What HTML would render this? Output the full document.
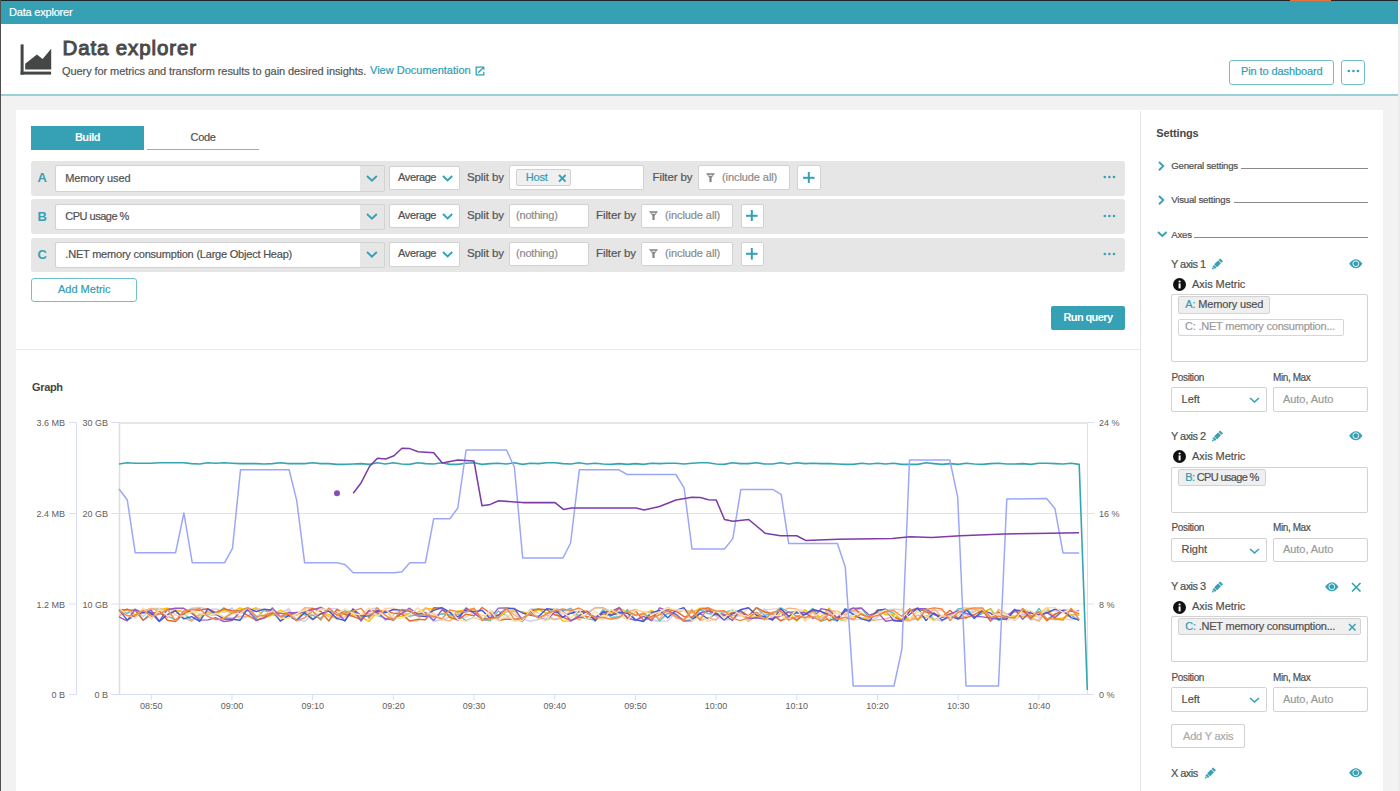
<!DOCTYPE html>
<html><head><meta charset="utf-8"><style>
*{box-sizing:border-box;margin:0;padding:0}
html,body{width:1400px;height:791px;overflow:hidden}
body{background:#f2f2f2;font-family:"Liberation Sans",sans-serif;color:#454646;position:relative}
.abs{position:absolute}
.t{position:absolute;white-space:nowrap;line-height:1;-webkit-text-stroke:0.2px currentColor}
.box{position:absolute;background:#fff;border:1px solid #d2d2d2;border-radius:2px}
.ax{font-family:"Liberation Sans",sans-serif;font-size:9px;fill:#606060}
</style></head><body>

<div class="abs" style="left:0;top:0;width:1400px;height:1px;background:#1e2629"></div>
<div class="abs" style="left:0;top:0;width:1px;height:791px;background:#4f4f4f"></div>
<div class="abs" style="left:1398px;top:0;width:2px;height:791px;background:#ececec"></div>
<div class="abs" style="left:1px;top:1px;width:1397px;height:23px;background:#36a0b4"></div>
<div class="abs" style="left:1290px;top:0;width:41px;height:1px;background:#e8733a"></div>
<div class="t" style="left:9px;top:6.69px;font-size:11px;color:#fff;letter-spacing:-0.2px;">Data explorer</div>
<div class="abs" style="left:1px;top:24px;width:1397px;height:70px;background:#fff"></div>
<div class="abs" style="left:1px;top:94px;width:1397px;height:2px;background:#9bd0db"></div>
<svg class="abs" style="left:20px;top:44px" width="33" height="32"><rect x="0.6" y="0.4" width="3" height="30.3" fill="#454646"/><rect x="0.6" y="27.6" width="30.5" height="3" fill="#454646"/><path d="M5.2 19.8 L16.9 10.6 L22.6 15.1 L31.2 4.7 L31.2 25.6 L5.2 25.6 Z" fill="#454646"/></svg>
<div class="t" style="left:62.5px;top:38.35px;font-size:20.5px;color:#4a4a4a;letter-spacing:0.87px;-webkit-text-stroke:1px #4a4a4a;">Data explorer</div>
<div class="t" style="left:62px;top:65.59px;font-size:11px;color:#555;letter-spacing:-0.08px;">Query for metrics and transform results to gain desired insights.</div>
<div class="t" style="left:370px;top:65.49px;font-size:11px;color:#2f9db3;">View Documentation</div>
<svg class="abs" style="left:475px;top:65.8px" width="10" height="10"><path d="M6.2 1.2 H1.2 V8.8 H8.8 V5.8" fill="none" stroke="#36a0b4" stroke-width="1.3"/><path d="M3.6 6.3 L7.2 2.7" stroke="#36a0b4" stroke-width="1.4" stroke-linecap="round"/><path d="M5.6 0.6 H9.4 V4.4 Z" fill="#36a0b4"/></svg>
<div class="abs" style="left:1228.5px;top:60px;width:105.5px;height:24.5px;border:1.5px solid #70bfcd;border-radius:3px;background:#fff"></div>
<div class="t" style="left:1241px;top:66.49px;font-size:11px;color:#2f9db3;letter-spacing:-0.1px;">Pin to dashboard</div>
<div class="abs" style="left:1341px;top:60px;width:23.5px;height:24.5px;border:1.5px solid #70bfcd;border-radius:3px;background:#fff"></div>
<svg class="abs" style="left:1346.5px;top:69.2px" width="14" height="4"><circle cx="1.8" cy="2" r="1.3" fill="#36a0b4"/><circle cx="6.3999999999999995" cy="2" r="1.3" fill="#36a0b4"/><circle cx="11.0" cy="2" r="1.3" fill="#36a0b4"/></svg>
<div class="abs" style="left:16px;top:110px;width:1125px;height:681px;background:#fff"></div>
<div class="abs" style="left:1140px;top:111px;width:1px;height:680px;background:#e4e4e4"></div>
<div class="abs" style="left:1141px;top:110px;width:242px;height:681px;background:#fff"></div>
<div class="abs" style="left:16px;top:349px;width:1124px;height:1px;background:#e8e8e8"></div>
<div class="abs" style="left:31px;top:126px;width:113px;height:24px;background:#36a0b4"></div>
<div class="t" style="left:31px;top:132.39px;font-size:11px;color:#fff;font-weight:bold;-webkit-text-stroke:0;letter-spacing:-0.45px;width:113px;text-align:center;">Build</div>
<div class="abs" style="left:147px;top:149px;width:112px;height:1.3px;background:#70bfcd"></div>
<div class="t" style="left:147px;top:132.39px;font-size:11px;color:#505050;letter-spacing:-0.35px;width:112px;text-align:center;">Code</div>
<div class="abs" style="left:31px;top:161px;width:1094px;height:34.6px;background:#e6e6e6;border-radius:3px"></div>
<div class="t" style="left:37.5px;top:171.40px;font-size:13px;color:#36a0b4;font-weight:bold;-webkit-text-stroke:0;letter-spacing:-0.3px;">A</div>
<div class="box" style="left:55.4px;top:165.2px;width:329.4px;height:26.4px;background:#e6e6e6"></div>
<div class="abs" style="left:56.4px;top:166.2px;width:303.3px;height:24.4px;background:#fff;border-radius:2px 0 0 2px"></div>
<div class="t" style="left:65.3px;top:172.59px;font-size:11px;color:#505050;letter-spacing:-0.14px;">Memory used</div>
<svg class="abs" style="left:366px;top:174.8px" width="11.8" height="7.6"><polyline points="1,1 5.9,5.6 10.8,1" fill="none" stroke="#36a0b4" stroke-width="1.9"/></svg>
<div class="box" style="left:388.5px;top:165.5px;width:71.3px;height:24.6px"></div>
<div class="t" style="left:398.1px;top:171.69px;font-size:11px;color:#505050;letter-spacing:-0.4px;">Average</div>
<svg class="abs" style="left:442.1px;top:174.6px" width="11.2" height="7.4"><polyline points="1,1 5.6,5.4 10.2,1" fill="none" stroke="#36a0b4" stroke-width="1.9"/></svg>
<div class="t" style="left:467px;top:171.97px;font-size:11.5px;color:#555;letter-spacing:-0.1px;">Split by</div>
<div class="box" style="left:508.6px;top:165.4px;width:135.69999999999993px;height:24.4px"></div>
<div class="abs" style="left:516.1px;top:169.3px;width:55.3px;height:17.1px;background:#f0f0f0;border:1px solid #d0d0d0;border-radius:2px"></div>
<div class="t" style="left:525.7px;top:171.69px;font-size:11px;color:#2f9db3;letter-spacing:-0.18px;">Host</div>
<svg class="abs" style="left:558px;top:174px" width="8.6" height="8.6"><path d="M1 1 L7.6 7.6 M7.6 1 L1 7.6" stroke="#36a0b4" stroke-width="1.8"/></svg>
<div class="t" style="left:652.5px;top:171.97px;font-size:11.5px;color:#555;letter-spacing:-0.1px;">Filter by</div>
<div class="box" style="left:698px;top:165.4px;width:92px;height:24.4px"></div>
<svg class="abs" style="left:705.7px;top:172.9px" width="10" height="10"><path d="M0 0.2 H9 L5.6 4.8 V9 H3.4 V4.8 Z" fill="#858585"/><rect x="2.6" y="1.8" width="3.8" height="1.1" fill="#fff" opacity="0.85"/></svg>
<div class="t" style="left:722px;top:171.79px;font-size:11px;color:#8a8a8a;letter-spacing:-0.08px;">(include all)</div>
<div class="box" style="left:797.2px;top:165.4px;width:23.4px;height:24.4px"></div>
<svg class="abs" style="left:803.0px;top:171.6px" width="11.6" height="11.6"><rect x="4.8" y="0" width="2" height="11.6" fill="#36a0b4"/><rect x="0" y="4.8" width="11.6" height="2" fill="#36a0b4"/></svg>
<svg class="abs" style="left:1103px;top:175.2px" width="14" height="4"><circle cx="1.8" cy="2" r="1.3" fill="#36a0b4"/><circle cx="6.3999999999999995" cy="2" r="1.3" fill="#36a0b4"/><circle cx="11.0" cy="2" r="1.3" fill="#36a0b4"/></svg>
<div class="abs" style="left:31px;top:199.3px;width:1094px;height:34.6px;background:#e6e6e6;border-radius:3px"></div>
<div class="t" style="left:37.5px;top:209.70px;font-size:13px;color:#36a0b4;font-weight:bold;-webkit-text-stroke:0;letter-spacing:-0.3px;">B</div>
<div class="box" style="left:55.4px;top:203.5px;width:329.4px;height:26.4px;background:#e6e6e6"></div>
<div class="abs" style="left:56.4px;top:204.5px;width:303.3px;height:24.4px;background:#fff;border-radius:2px 0 0 2px"></div>
<div class="t" style="left:65.3px;top:210.89px;font-size:11px;color:#505050;letter-spacing:-0.5px;">CPU usage %</div>
<svg class="abs" style="left:366px;top:213.10000000000002px" width="11.8" height="7.6"><polyline points="1,1 5.9,5.6 10.8,1" fill="none" stroke="#36a0b4" stroke-width="1.9"/></svg>
<div class="box" style="left:388.5px;top:203.8px;width:71.3px;height:24.6px"></div>
<div class="t" style="left:398.1px;top:209.99px;font-size:11px;color:#505050;letter-spacing:-0.4px;">Average</div>
<svg class="abs" style="left:442.1px;top:212.9px" width="11.2" height="7.4"><polyline points="1,1 5.6,5.4 10.2,1" fill="none" stroke="#36a0b4" stroke-width="1.9"/></svg>
<div class="t" style="left:467px;top:210.27px;font-size:11.5px;color:#555;letter-spacing:-0.1px;">Split by</div>
<div class="box" style="left:508.6px;top:203.70000000000002px;width:80.0px;height:24.4px"></div>
<div class="t" style="left:516px;top:210.09px;font-size:11px;color:#8a8a8a;letter-spacing:-0.2px;">(nothing)</div>
<div class="t" style="left:596px;top:210.27px;font-size:11.5px;color:#555;letter-spacing:-0.1px;">Filter by</div>
<div class="box" style="left:641px;top:203.70000000000002px;width:92px;height:24.4px"></div>
<svg class="abs" style="left:648.7px;top:211.20000000000002px" width="10" height="10"><path d="M0 0.2 H9 L5.6 4.8 V9 H3.4 V4.8 Z" fill="#858585"/><rect x="2.6" y="1.8" width="3.8" height="1.1" fill="#fff" opacity="0.85"/></svg>
<div class="t" style="left:665px;top:210.09px;font-size:11px;color:#8a8a8a;letter-spacing:-0.08px;">(include all)</div>
<div class="box" style="left:740.6px;top:203.70000000000002px;width:23.4px;height:24.4px"></div>
<svg class="abs" style="left:746.4px;top:209.9px" width="11.6" height="11.6"><rect x="4.8" y="0" width="2" height="11.6" fill="#36a0b4"/><rect x="0" y="4.8" width="11.6" height="2" fill="#36a0b4"/></svg>
<svg class="abs" style="left:1103px;top:213.5px" width="14" height="4"><circle cx="1.8" cy="2" r="1.3" fill="#36a0b4"/><circle cx="6.3999999999999995" cy="2" r="1.3" fill="#36a0b4"/><circle cx="11.0" cy="2" r="1.3" fill="#36a0b4"/></svg>
<div class="abs" style="left:31px;top:237.5px;width:1094px;height:34.6px;background:#e6e6e6;border-radius:3px"></div>
<div class="t" style="left:37.5px;top:247.90px;font-size:13px;color:#36a0b4;font-weight:bold;-webkit-text-stroke:0;letter-spacing:-0.3px;">C</div>
<div class="box" style="left:55.4px;top:241.7px;width:329.4px;height:26.4px;background:#e6e6e6"></div>
<div class="abs" style="left:56.4px;top:242.7px;width:303.3px;height:24.4px;background:#fff;border-radius:2px 0 0 2px"></div>
<div class="t" style="left:65.3px;top:249.09px;font-size:11px;color:#505050;letter-spacing:-0.21px;">.NET memory consumption (Large Object Heap)</div>
<svg class="abs" style="left:366px;top:251.3px" width="11.8" height="7.6"><polyline points="1,1 5.9,5.6 10.8,1" fill="none" stroke="#36a0b4" stroke-width="1.9"/></svg>
<div class="box" style="left:388.5px;top:242.0px;width:71.3px;height:24.6px"></div>
<div class="t" style="left:398.1px;top:248.19px;font-size:11px;color:#505050;letter-spacing:-0.4px;">Average</div>
<svg class="abs" style="left:442.1px;top:251.1px" width="11.2" height="7.4"><polyline points="1,1 5.6,5.4 10.2,1" fill="none" stroke="#36a0b4" stroke-width="1.9"/></svg>
<div class="t" style="left:467px;top:248.47px;font-size:11.5px;color:#555;letter-spacing:-0.1px;">Split by</div>
<div class="box" style="left:508.6px;top:241.9px;width:80.0px;height:24.4px"></div>
<div class="t" style="left:516px;top:248.29px;font-size:11px;color:#8a8a8a;letter-spacing:-0.2px;">(nothing)</div>
<div class="t" style="left:596px;top:248.47px;font-size:11.5px;color:#555;letter-spacing:-0.1px;">Filter by</div>
<div class="box" style="left:641px;top:241.9px;width:92px;height:24.4px"></div>
<svg class="abs" style="left:648.7px;top:249.4px" width="10" height="10"><path d="M0 0.2 H9 L5.6 4.8 V9 H3.4 V4.8 Z" fill="#858585"/><rect x="2.6" y="1.8" width="3.8" height="1.1" fill="#fff" opacity="0.85"/></svg>
<div class="t" style="left:665px;top:248.29px;font-size:11px;color:#8a8a8a;letter-spacing:-0.08px;">(include all)</div>
<div class="box" style="left:740.6px;top:241.9px;width:23.4px;height:24.4px"></div>
<svg class="abs" style="left:746.4px;top:248.1px" width="11.6" height="11.6"><rect x="4.8" y="0" width="2" height="11.6" fill="#36a0b4"/><rect x="0" y="4.8" width="11.6" height="2" fill="#36a0b4"/></svg>
<svg class="abs" style="left:1103px;top:251.7px" width="14" height="4"><circle cx="1.8" cy="2" r="1.3" fill="#36a0b4"/><circle cx="6.3999999999999995" cy="2" r="1.3" fill="#36a0b4"/><circle cx="11.0" cy="2" r="1.3" fill="#36a0b4"/></svg>
<div class="abs" style="left:31.2px;top:278.4px;width:106.2px;height:23.6px;border:1.5px solid #70bfcd;border-radius:3px;background:#fff"></div>
<div class="t" style="left:31.2px;top:284.09px;font-size:11px;color:#2f9db3;width:106.2px;text-align:center;">Add Metric</div>
<div class="abs" style="left:1051.3px;top:305.6px;width:73.3px;height:24.3px;background:#36a0b4;border-radius:2px"></div>
<div class="t" style="left:1051.3px;top:311.59px;font-size:11px;color:#fff;font-weight:bold;-webkit-text-stroke:0;letter-spacing:-0.6px;width:73.3px;text-align:center;">Run query</div>
<div class="t" style="left:32px;top:382.39px;font-size:11px;color:#454646;font-weight:bold;-webkit-text-stroke:0;letter-spacing:-0.35px;">Graph</div>
<svg class="abs" style="left:16px;top:350px" width="1124" height="441" viewBox="16 350 1124 441">
<line x1="119" y1="513.5" x2="1087.5" y2="513.5" stroke="#e3e3e3" stroke-width="1"/>
<line x1="119" y1="604" x2="1087.5" y2="604" stroke="#e3e3e3" stroke-width="1"/>
<line x1="119" y1="423" x2="1087.5" y2="423" stroke="#dedede" stroke-width="1.5"/>
<line x1="119.5" y1="423" x2="119.5" y2="694.5" stroke="#dedede" stroke-width="1.5"/>
<line x1="119" y1="694.5" x2="1088" y2="694.5" stroke="#d8ddf9" stroke-width="1"/>
<line x1="76.5" y1="422.5" x2="76.5" y2="694.5" stroke="#d8ddf9" stroke-width="1"/>
<line x1="1087.5" y1="422.5" x2="1087.5" y2="694.5" stroke="#d8ddf9" stroke-width="1"/>
<line x1="69" y1="422.5" x2="76.5" y2="422.5" stroke="#d8ddf9" stroke-width="1"/>
<line x1="111.5" y1="422.5" x2="119" y2="422.5" stroke="#d8ddf9" stroke-width="1"/>
<line x1="1087.5" y1="422.5" x2="1094" y2="422.5" stroke="#d8ddf9" stroke-width="1"/>
<text x="65" y="426.0" text-anchor="end" class="ax">3.6 MB</text>
<text x="108" y="426.0" text-anchor="end" class="ax">30 GB</text>
<text x="1099" y="426.0" class="ax">24 %</text>
<line x1="69" y1="513.5" x2="76.5" y2="513.5" stroke="#d8ddf9" stroke-width="1"/>
<line x1="111.5" y1="513.5" x2="119" y2="513.5" stroke="#d8ddf9" stroke-width="1"/>
<line x1="1087.5" y1="513.5" x2="1094" y2="513.5" stroke="#d8ddf9" stroke-width="1"/>
<text x="65" y="517.0" text-anchor="end" class="ax">2.4 MB</text>
<text x="108" y="517.0" text-anchor="end" class="ax">20 GB</text>
<text x="1099" y="517.0" class="ax">16 %</text>
<line x1="69" y1="604" x2="76.5" y2="604" stroke="#d8ddf9" stroke-width="1"/>
<line x1="111.5" y1="604" x2="119" y2="604" stroke="#d8ddf9" stroke-width="1"/>
<line x1="1087.5" y1="604" x2="1094" y2="604" stroke="#d8ddf9" stroke-width="1"/>
<text x="65" y="607.5" text-anchor="end" class="ax">1.2 MB</text>
<text x="108" y="607.5" text-anchor="end" class="ax">10 GB</text>
<text x="1099" y="607.5" class="ax">8 %</text>
<line x1="69" y1="694.5" x2="76.5" y2="694.5" stroke="#d8ddf9" stroke-width="1"/>
<line x1="111.5" y1="694.5" x2="119" y2="694.5" stroke="#d8ddf9" stroke-width="1"/>
<line x1="1087.5" y1="694.5" x2="1094" y2="694.5" stroke="#d8ddf9" stroke-width="1"/>
<text x="65" y="698.0" text-anchor="end" class="ax">0 B</text>
<text x="108" y="698.0" text-anchor="end" class="ax">0 B</text>
<text x="1099" y="698.0" class="ax">0 %</text>
<line x1="151.3" y1="694.5" x2="151.3" y2="700" stroke="#d8ddf9" stroke-width="1"/>
<text x="151.3" y="709" text-anchor="middle" class="ax">08:50</text>
<line x1="232.0" y1="694.5" x2="232.0" y2="700" stroke="#d8ddf9" stroke-width="1"/>
<text x="232.0" y="709" text-anchor="middle" class="ax">09:00</text>
<line x1="312.7" y1="694.5" x2="312.7" y2="700" stroke="#d8ddf9" stroke-width="1"/>
<text x="312.7" y="709" text-anchor="middle" class="ax">09:10</text>
<line x1="393.4" y1="694.5" x2="393.4" y2="700" stroke="#d8ddf9" stroke-width="1"/>
<text x="393.4" y="709" text-anchor="middle" class="ax">09:20</text>
<line x1="474.0" y1="694.5" x2="474.0" y2="700" stroke="#d8ddf9" stroke-width="1"/>
<text x="474.0" y="709" text-anchor="middle" class="ax">09:30</text>
<line x1="554.7" y1="694.5" x2="554.7" y2="700" stroke="#d8ddf9" stroke-width="1"/>
<text x="554.7" y="709" text-anchor="middle" class="ax">09:40</text>
<line x1="635.4" y1="694.5" x2="635.4" y2="700" stroke="#d8ddf9" stroke-width="1"/>
<text x="635.4" y="709" text-anchor="middle" class="ax">09:50</text>
<line x1="716.1" y1="694.5" x2="716.1" y2="700" stroke="#d8ddf9" stroke-width="1"/>
<text x="716.1" y="709" text-anchor="middle" class="ax">10:00</text>
<line x1="796.8" y1="694.5" x2="796.8" y2="700" stroke="#d8ddf9" stroke-width="1"/>
<text x="796.8" y="709" text-anchor="middle" class="ax">10:10</text>
<line x1="877.5" y1="694.5" x2="877.5" y2="700" stroke="#d8ddf9" stroke-width="1"/>
<text x="877.5" y="709" text-anchor="middle" class="ax">10:20</text>
<line x1="958.2" y1="694.5" x2="958.2" y2="700" stroke="#d8ddf9" stroke-width="1"/>
<text x="958.2" y="709" text-anchor="middle" class="ax">10:30</text>
<line x1="1038.9" y1="694.5" x2="1038.9" y2="700" stroke="#d8ddf9" stroke-width="1"/>
<text x="1038.9" y="709" text-anchor="middle" class="ax">10:40</text>
<polyline fill="none" stroke="#fbd3bd" stroke-width="1.4" stroke-linejoin="round" points="119.0,612.0 127.1,609.6 135.1,616.6 143.2,608.5 151.3,615.0 159.3,612.6 167.4,608.3 175.5,614.6 183.6,608.0 191.6,613.6 199.7,608.5 207.8,608.8 215.8,613.4 223.9,619.1 232.0,609.2 240.0,610.6 248.1,616.3 256.2,620.8 264.2,615.6 272.3,613.1 280.4,621.2 288.5,608.2 296.5,619.5 304.6,611.6 312.7,609.5 320.7,609.1 328.8,611.8 336.9,618.9 344.9,610.0 353.0,615.6 361.1,616.4 369.1,612.7 377.2,615.2 385.3,608.4 393.4,608.3 401.4,610.4 409.5,617.0 417.6,613.5 425.6,611.9 433.7,615.7 441.8,613.8 449.8,611.7 457.9,618.6 466.0,617.3 474.0,610.9 482.1,615.5 490.2,614.9 498.3,619.8 506.3,617.7 514.4,611.5 522.5,621.2 530.5,609.2 538.6,613.4 546.7,618.1 554.7,609.6 562.8,614.3 570.9,608.0 578.9,616.9 587.0,618.2 595.1,615.5 603.1,619.8 611.2,611.9 619.3,617.2 627.4,615.8 635.4,615.6 643.5,613.9 651.6,619.3 659.6,620.7 667.7,614.1 675.8,616.8 683.8,608.3 691.9,617.3 700.0,616.6 708.0,621.4 716.1,619.0 724.2,611.5 732.3,612.9 740.3,616.9 748.4,607.8 756.5,614.0 764.5,609.9 772.6,609.1 780.7,608.3 788.7,618.3 796.8,609.3 804.9,611.0 812.9,613.0 821.0,619.7 829.1,608.6 837.2,613.8 845.2,615.2 853.3,619.9 861.4,619.0 869.4,619.6 877.5,611.4 885.6,613.3 893.6,612.5 901.7,619.9 909.8,620.9 917.8,609.6 925.9,610.0 934.0,610.7 942.1,610.8 950.1,614.3 958.2,615.7 966.3,611.2 974.3,607.6 982.4,613.4 990.5,612.7 998.5,615.4 1006.6,620.8 1014.7,617.2 1022.7,614.7 1030.8,616.1 1038.9,617.0 1047.0,608.3 1055.0,620.1 1063.1,618.4 1071.2,619.7 1079.2,618.7"/>
<polyline fill="none" stroke="#c9cdf3" stroke-width="1.4" stroke-linejoin="round" points="119.0,613.0 127.1,613.1 135.1,608.9 143.2,616.4 151.3,608.4 159.3,608.4 167.4,610.4 175.5,609.8 183.6,612.3 191.6,608.2 199.7,607.5 207.8,609.6 215.8,608.9 223.9,612.6 232.0,607.9 240.0,619.7 248.1,616.1 256.2,609.6 264.2,611.0 272.3,612.4 280.4,612.6 288.5,609.2 296.5,619.4 304.6,621.4 312.7,614.0 320.7,614.3 328.8,608.7 336.9,608.9 344.9,612.3 353.0,611.2 361.1,619.1 369.1,609.8 377.2,607.8 385.3,620.8 393.4,614.9 401.4,609.6 409.5,615.1 417.6,607.9 425.6,614.9 433.7,621.2 441.8,619.6 449.8,617.2 457.9,611.2 466.0,612.6 474.0,609.8 482.1,618.3 490.2,615.0 498.3,618.4 506.3,612.1 514.4,610.6 522.5,618.9 530.5,621.3 538.6,619.4 546.7,618.8 554.7,619.0 562.8,617.9 570.9,610.7 578.9,614.7 587.0,612.5 595.1,607.9 603.1,607.9 611.2,611.4 619.3,611.1 627.4,617.2 635.4,620.9 643.5,613.8 651.6,620.6 659.6,621.3 667.7,620.9 675.8,612.6 683.8,610.6 691.9,610.7 700.0,610.3 708.0,610.4 716.1,616.2 724.2,620.1 732.3,619.3 740.3,614.2 748.4,616.6 756.5,618.7 764.5,608.7 772.6,616.7 780.7,620.2 788.7,618.5 796.8,618.0 804.9,614.2 812.9,610.0 821.0,618.5 829.1,612.2 837.2,618.7 845.2,621.1 853.3,613.0 861.4,613.1 869.4,620.8 877.5,617.6 885.6,609.9 893.6,609.3 901.7,609.6 909.8,620.2 917.8,618.8 925.9,609.5 934.0,619.1 942.1,621.2 950.1,616.7 958.2,612.4 966.3,615.2 974.3,609.3 982.4,607.7 990.5,621.1 998.5,616.6 1006.6,614.9 1014.7,620.6 1022.7,613.6 1030.8,619.7 1038.9,619.1 1047.0,610.5 1055.0,611.0 1063.1,611.6 1071.2,610.9 1079.2,615.7"/>
<polyline fill="none" stroke="#56c3cf" stroke-width="1.4" stroke-linejoin="round" points="119.0,611.1 127.1,613.4 135.1,609.3 143.2,620.2 151.3,612.5 159.3,613.9 167.4,615.7 175.5,620.2 183.6,613.4 191.6,620.3 199.7,614.5 207.8,614.9 215.8,614.8 223.9,607.8 232.0,613.7 240.0,610.1 248.1,607.6 256.2,618.7 264.2,609.9 272.3,614.1 280.4,617.7 288.5,615.3 296.5,612.1 304.6,614.8 312.7,615.3 320.7,618.5 328.8,609.0 336.9,615.3 344.9,611.0 353.0,611.4 361.1,618.3 369.1,614.6 377.2,615.4 385.3,618.1 393.4,620.3 401.4,613.7 409.5,616.1 417.6,614.6 425.6,614.7 433.7,617.2 441.8,613.8 449.8,615.0 457.9,614.2 466.0,620.7 474.0,617.3 482.1,619.8 490.2,620.7 498.3,611.1 506.3,615.3 514.4,620.7 522.5,619.3 530.5,609.4 538.6,609.2 546.7,613.7 554.7,608.5 562.8,610.9 570.9,608.5 578.9,616.9 587.0,618.5 595.1,620.1 603.1,609.7 611.2,617.5 619.3,616.7 627.4,609.5 635.4,619.9 643.5,621.0 651.6,610.6 659.6,620.8 667.7,613.1 675.8,614.3 683.8,621.4 691.9,619.2 700.0,609.8 708.0,613.5 716.1,614.7 724.2,612.2 732.3,610.2 740.3,612.0 748.4,617.6 756.5,607.8 764.5,615.3 772.6,613.7 780.7,607.8 788.7,612.1 796.8,616.2 804.9,614.7 812.9,608.4 821.0,621.3 829.1,618.5 837.2,621.1 845.2,609.0 853.3,611.2 861.4,608.1 869.4,618.4 877.5,611.3 885.6,609.3 893.6,613.4 901.7,620.3 909.8,619.0 917.8,611.1 925.9,609.6 934.0,620.4 942.1,615.5 950.1,617.3 958.2,608.8 966.3,608.3 974.3,617.1 982.4,613.5 990.5,608.5 998.5,620.6 1006.6,616.4 1014.7,618.7 1022.7,608.7 1030.8,619.5 1038.9,608.4 1047.0,619.6 1055.0,613.9 1063.1,612.2 1071.2,615.2 1079.2,620.5"/>
<polyline fill="none" stroke="#f6c400" stroke-width="1.4" stroke-linejoin="round" points="119.0,611.3 127.1,609.3 135.1,614.9 143.2,610.8 151.3,609.0 159.3,609.8 167.4,608.2 175.5,610.3 183.6,611.9 191.6,611.8 199.7,618.1 207.8,611.6 215.8,614.5 223.9,610.0 232.0,612.4 240.0,607.8 248.1,611.0 256.2,607.7 264.2,617.8 272.3,615.2 280.4,610.2 288.5,614.1 296.5,620.6 304.6,609.0 312.7,619.0 320.7,613.6 328.8,614.4 336.9,619.2 344.9,613.0 353.0,614.6 361.1,617.1 369.1,621.3 377.2,612.3 385.3,619.2 393.4,617.4 401.4,616.4 409.5,613.2 417.6,612.4 425.6,608.3 433.7,609.3 441.8,608.5 449.8,617.9 457.9,611.1 466.0,609.8 474.0,608.7 482.1,619.3 490.2,619.7 498.3,616.9 506.3,611.4 514.4,610.9 522.5,611.6 530.5,613.9 538.6,609.7 546.7,613.7 554.7,611.2 562.8,621.0 570.9,621.1 578.9,615.2 587.0,610.9 595.1,621.0 603.1,611.8 611.2,612.5 619.3,607.5 627.4,612.8 635.4,614.1 643.5,614.5 651.6,610.3 659.6,614.6 667.7,607.6 675.8,611.2 683.8,608.8 691.9,613.1 700.0,608.1 708.0,607.8 716.1,611.8 724.2,610.8 732.3,615.7 740.3,614.9 748.4,618.0 756.5,616.7 764.5,617.5 772.6,619.8 780.7,613.0 788.7,612.1 796.8,621.3 804.9,609.6 812.9,617.6 821.0,616.5 829.1,608.1 837.2,619.2 845.2,620.0 853.3,616.3 861.4,617.8 869.4,618.9 877.5,609.5 885.6,614.8 893.6,614.6 901.7,619.2 909.8,618.8 917.8,619.1 925.9,615.7 934.0,620.0 942.1,617.1 950.1,617.2 958.2,610.7 966.3,607.9 974.3,609.4 982.4,612.5 990.5,609.0 998.5,619.2 1006.6,615.3 1014.7,616.3 1022.7,616.3 1030.8,617.0 1038.9,614.4 1047.0,607.5 1055.0,618.7 1063.1,618.0 1071.2,614.5 1079.2,615.0"/>
<polyline fill="none" stroke="#f5b27f" stroke-width="1.4" stroke-linejoin="round" points="119.0,616.7 127.1,608.4 135.1,617.8 143.2,611.0 151.3,608.5 159.3,611.2 167.4,617.7 175.5,610.4 183.6,617.9 191.6,621.2 199.7,614.4 207.8,612.9 215.8,614.2 223.9,617.1 232.0,618.2 240.0,616.1 248.1,616.5 256.2,608.6 264.2,609.6 272.3,611.1 280.4,617.9 288.5,611.8 296.5,615.4 304.6,607.7 312.7,608.3 320.7,611.3 328.8,616.9 336.9,617.2 344.9,617.0 353.0,611.6 361.1,614.7 369.1,614.0 377.2,614.0 385.3,609.2 393.4,620.0 401.4,610.3 409.5,621.2 417.6,620.6 425.6,607.7 433.7,613.9 441.8,619.0 449.8,621.1 457.9,613.8 466.0,611.3 474.0,610.4 482.1,620.7 490.2,610.4 498.3,615.6 506.3,609.5 514.4,614.8 522.5,620.8 530.5,609.4 538.6,619.0 546.7,614.6 554.7,619.9 562.8,617.3 570.9,610.7 578.9,620.1 587.0,614.3 595.1,607.8 603.1,607.6 611.2,614.4 619.3,613.8 627.4,611.7 635.4,609.5 643.5,612.3 651.6,611.9 659.6,619.3 667.7,607.5 675.8,618.0 683.8,619.2 691.9,609.2 700.0,620.5 708.0,617.5 716.1,620.1 724.2,611.6 732.3,612.7 740.3,613.0 748.4,621.5 756.5,615.7 764.5,612.5 772.6,613.5 780.7,611.4 788.7,608.2 796.8,608.9 804.9,619.2 812.9,611.5 821.0,620.6 829.1,611.0 837.2,611.2 845.2,614.7 853.3,610.2 861.4,612.7 869.4,620.9 877.5,619.9 885.6,618.9 893.6,616.3 901.7,620.3 909.8,620.7 917.8,615.2 925.9,617.6 934.0,608.2 942.1,617.8 950.1,613.8 958.2,618.0 966.3,616.5 974.3,611.5 982.4,608.2 990.5,620.5 998.5,609.3 1006.6,614.1 1014.7,612.3 1022.7,611.7 1030.8,617.8 1038.9,621.2 1047.0,611.1 1055.0,616.7 1063.1,611.7 1071.2,615.3 1079.2,613.0"/>
<polyline fill="none" stroke="#e8672a" stroke-width="1.4" stroke-linejoin="round" points="119.0,609.8 127.1,609.8 135.1,610.4 143.2,620.2 151.3,614.5 159.3,610.6 167.4,620.2 175.5,621.5 183.6,613.8 191.6,609.5 199.7,610.2 207.8,608.8 215.8,612.3 223.9,608.8 232.0,610.8 240.0,611.1 248.1,615.5 256.2,619.9 264.2,618.0 272.3,613.3 280.4,613.3 288.5,614.8 296.5,612.8 304.6,612.2 312.7,608.4 320.7,611.4 328.8,621.0 336.9,609.3 344.9,614.5 353.0,616.3 361.1,619.6 369.1,610.5 377.2,611.3 385.3,611.0 393.4,613.1 401.4,613.7 409.5,620.9 417.6,619.4 425.6,619.7 433.7,607.8 441.8,608.0 449.8,617.4 457.9,620.0 466.0,614.1 474.0,615.7 482.1,607.5 490.2,613.0 498.3,620.5 506.3,619.1 514.4,619.5 522.5,621.1 530.5,611.0 538.6,609.0 546.7,609.7 554.7,614.8 562.8,617.0 570.9,620.7 578.9,617.6 587.0,616.6 595.1,618.2 603.1,613.9 611.2,615.2 619.3,608.1 627.4,618.5 635.4,610.8 643.5,620.4 651.6,616.5 659.6,611.8 667.7,609.3 675.8,611.0 683.8,616.4 691.9,617.3 700.0,609.1 708.0,608.5 716.1,614.8 724.2,615.7 732.3,612.9 740.3,610.6 748.4,615.9 756.5,607.6 764.5,611.7 772.6,613.9 780.7,620.9 788.7,616.5 796.8,619.9 804.9,614.2 812.9,610.8 821.0,611.0 829.1,620.9 837.2,617.4 845.2,611.8 853.3,607.8 861.4,614.5 869.4,616.9 877.5,613.4 885.6,611.1 893.6,616.8 901.7,620.5 909.8,610.7 917.8,608.0 925.9,612.2 934.0,613.4 942.1,617.1 950.1,610.3 958.2,618.7 966.3,617.8 974.3,614.6 982.4,610.4 990.5,621.1 998.5,611.9 1006.6,619.0 1014.7,610.7 1022.7,610.6 1030.8,618.1 1038.9,611.6 1047.0,620.8 1055.0,614.4 1063.1,610.1 1071.2,610.6 1079.2,613.3"/>
<polyline fill="none" stroke="#9a5ac6" stroke-width="1.4" stroke-linejoin="round" points="119.0,616.8 127.1,620.8 135.1,609.5 143.2,613.0 151.3,610.5 159.3,621.1 167.4,609.5 175.5,608.2 183.6,608.3 191.6,613.0 199.7,620.1 207.8,619.9 215.8,617.8 223.9,621.5 232.0,620.5 240.0,612.1 248.1,610.1 256.2,620.6 264.2,617.9 272.3,607.9 280.4,616.8 288.5,612.8 296.5,612.7 304.6,612.1 312.7,609.9 320.7,607.5 328.8,611.4 336.9,612.4 344.9,620.9 353.0,609.2 361.1,621.0 369.1,610.4 377.2,612.5 385.3,619.0 393.4,619.0 401.4,613.6 409.5,608.2 417.6,614.1 425.6,612.7 433.7,620.4 441.8,610.2 449.8,612.6 457.9,620.1 466.0,607.9 474.0,613.3 482.1,618.9 490.2,618.2 498.3,608.1 506.3,608.0 514.4,608.4 522.5,620.4 530.5,611.1 538.6,618.0 546.7,620.1 554.7,612.2 562.8,611.3 570.9,620.9 578.9,616.1 587.0,611.2 595.1,617.5 603.1,611.9 611.2,611.4 619.3,607.6 627.4,618.1 635.4,620.3 643.5,616.4 651.6,620.7 659.6,607.8 667.7,610.8 675.8,614.2 683.8,620.9 691.9,620.9 700.0,612.9 708.0,611.0 716.1,613.5 724.2,614.4 732.3,620.5 740.3,610.1 748.4,618.7 756.5,617.8 764.5,619.0 772.6,618.3 780.7,616.0 788.7,612.1 796.8,612.0 804.9,612.6 812.9,618.5 821.0,608.6 829.1,610.3 837.2,618.0 845.2,611.0 853.3,608.4 861.4,608.0 869.4,615.2 877.5,612.1 885.6,621.2 893.6,619.9 901.7,621.3 909.8,611.2 917.8,608.7 925.9,608.8 934.0,614.5 942.1,617.4 950.1,613.8 958.2,610.8 966.3,613.3 974.3,616.2 982.4,616.9 990.5,618.0 998.5,619.4 1006.6,616.8 1014.7,609.2 1022.7,619.3 1030.8,611.6 1038.9,615.4 1047.0,612.7 1055.0,617.8 1063.1,610.3 1071.2,611.0 1079.2,610.9"/>
<polyline fill="none" stroke="#4556d6" stroke-width="1.4" stroke-linejoin="round" points="119.0,609.6 127.1,619.9 135.1,615.6 143.2,612.1 151.3,613.0 159.3,621.4 167.4,614.6 175.5,610.7 183.6,618.8 191.6,616.6 199.7,621.4 207.8,608.9 215.8,614.1 223.9,619.0 232.0,619.3 240.0,620.3 248.1,608.1 256.2,611.6 264.2,609.2 272.3,610.2 280.4,621.1 288.5,615.7 296.5,620.5 304.6,612.7 312.7,619.6 320.7,613.8 328.8,611.1 336.9,618.4 344.9,620.7 353.0,609.0 361.1,615.8 369.1,616.2 377.2,610.5 385.3,612.7 393.4,609.5 401.4,610.4 409.5,611.1 417.6,615.9 425.6,616.6 433.7,610.3 441.8,607.7 449.8,612.1 457.9,617.0 466.0,610.1 474.0,611.9 482.1,610.3 490.2,618.6 498.3,615.2 506.3,608.4 514.4,608.9 522.5,613.0 530.5,615.2 538.6,616.4 546.7,608.8 554.7,609.8 562.8,617.2 570.9,613.2 578.9,611.5 587.0,611.8 595.1,620.8 603.1,611.9 611.2,615.4 619.3,612.5 627.4,613.3 635.4,619.6 643.5,621.5 651.6,612.6 659.6,610.3 667.7,617.7 675.8,610.4 683.8,607.6 691.9,620.1 700.0,613.4 708.0,619.0 716.1,613.2 724.2,619.9 732.3,614.0 740.3,609.8 748.4,607.7 756.5,615.2 764.5,616.5 772.6,620.2 780.7,608.7 788.7,616.2 796.8,612.7 804.9,614.6 812.9,609.5 821.0,611.5 829.1,614.8 837.2,620.5 845.2,609.0 853.3,614.4 861.4,618.8 869.4,621.0 877.5,610.3 885.6,609.3 893.6,620.7 901.7,621.2 909.8,614.3 917.8,608.2 925.9,620.5 934.0,612.9 942.1,620.2 950.1,616.2 958.2,619.0 966.3,609.7 974.3,618.5 982.4,610.6 990.5,613.2 998.5,619.3 1006.6,619.1 1014.7,610.1 1022.7,610.6 1030.8,613.1 1038.9,614.8 1047.0,612.9 1055.0,609.2 1063.1,611.0 1071.2,617.6 1079.2,620.1"/>
<polyline fill="none" stroke="#fde1a6" stroke-width="1.4" stroke-linejoin="round" points="119.0,608.1 127.1,615.4 135.1,618.1 143.2,608.0 151.3,619.2 159.3,609.1 167.4,615.9 175.5,615.2 183.6,616.3 191.6,611.8 199.7,613.4 207.8,615.7 215.8,613.5 223.9,616.7 232.0,613.8 240.0,613.6 248.1,607.8 256.2,616.2 264.2,614.4 272.3,610.8 280.4,618.2 288.5,618.4 296.5,613.9 304.6,610.0 312.7,614.1 320.7,609.0 328.8,609.3 336.9,613.5 344.9,608.8 353.0,613.7 361.1,614.6 369.1,608.1 377.2,616.4 385.3,608.7 393.4,617.8 401.4,618.4 409.5,614.7 417.6,608.3 425.6,614.6 433.7,612.8 441.8,620.8 449.8,609.4 457.9,619.5 466.0,621.4 474.0,617.7 482.1,618.9 490.2,610.2 498.3,621.2 506.3,614.4 514.4,620.9 522.5,620.3 530.5,609.8 538.6,618.5 546.7,620.5 554.7,608.4 562.8,612.4 570.9,618.1 578.9,609.7 587.0,620.1 595.1,611.3 603.1,618.9 611.2,609.5 619.3,614.5 627.4,620.4 635.4,610.4 643.5,611.2 651.6,614.6 659.6,612.0 667.7,608.0 675.8,610.0 683.8,609.8 691.9,620.6 700.0,617.0 708.0,620.0 716.1,609.9 724.2,618.5 732.3,609.1 740.3,614.9 748.4,616.4 756.5,612.5 764.5,619.7 772.6,615.3 780.7,615.6 788.7,619.9 796.8,609.0 804.9,621.4 812.9,616.3 821.0,613.0 829.1,618.7 837.2,611.2 845.2,621.4 853.3,615.6 861.4,612.5 869.4,618.2 877.5,613.7 885.6,610.0 893.6,617.9 901.7,608.2 909.8,619.0 917.8,611.1 925.9,616.4 934.0,621.3 942.1,615.7 950.1,616.8 958.2,611.9 966.3,607.5 974.3,608.0 982.4,609.6 990.5,616.1 998.5,613.6 1006.6,614.7 1014.7,620.0 1022.7,609.3 1030.8,610.7 1038.9,616.6 1047.0,607.8 1055.0,607.5 1063.1,612.5 1071.2,609.0 1079.2,612.5"/>
<polyline fill="none" stroke="#f08a4b" stroke-width="1.4" stroke-linejoin="round" points="119.0,610.6 127.1,615.7 135.1,615.7 143.2,610.4 151.3,616.2 159.3,614.1 167.4,609.4 175.5,620.6 183.6,610.9 191.6,609.6 199.7,608.8 207.8,616.4 215.8,619.7 223.9,618.5 232.0,613.1 240.0,611.2 248.1,607.7 256.2,616.5 264.2,615.4 272.3,612.4 280.4,616.5 288.5,613.7 296.5,620.6 304.6,617.8 312.7,611.0 320.7,620.1 328.8,608.1 336.9,614.9 344.9,613.2 353.0,610.8 361.1,608.3 369.1,618.4 377.2,607.7 385.3,615.2 393.4,620.7 401.4,609.5 409.5,610.3 417.6,616.0 425.6,614.6 433.7,616.5 441.8,618.9 449.8,609.9 457.9,611.8 466.0,611.7 474.0,608.2 482.1,620.0 490.2,618.5 498.3,617.5 506.3,607.6 514.4,619.3 522.5,617.9 530.5,614.0 538.6,617.9 546.7,613.8 554.7,610.7 562.8,609.0 570.9,610.8 578.9,608.0 587.0,612.2 595.1,618.0 603.1,617.2 611.2,619.3 619.3,617.5 627.4,611.2 635.4,615.3 643.5,613.6 651.6,618.5 659.6,614.8 667.7,611.2 675.8,616.5 683.8,621.0 691.9,610.5 700.0,619.8 708.0,607.7 716.1,611.1 724.2,610.8 732.3,617.9 740.3,620.7 748.4,617.9 756.5,612.1 764.5,619.8 772.6,612.1 780.7,610.8 788.7,620.2 796.8,616.3 804.9,617.2 812.9,616.8 821.0,621.2 829.1,614.1 837.2,619.3 845.2,617.3 853.3,619.5 861.4,613.6 869.4,617.6 877.5,615.5 885.6,611.8 893.6,610.5 901.7,616.2 909.8,608.6 917.8,620.3 925.9,609.5 934.0,607.9 942.1,609.0 950.1,620.5 958.2,612.3 966.3,609.5 974.3,607.9 982.4,608.1 990.5,617.2 998.5,616.4 1006.6,617.3 1014.7,617.8 1022.7,608.4 1030.8,615.8 1038.9,612.6 1047.0,618.9 1055.0,619.0 1063.1,620.0 1071.2,608.4 1079.2,619.6"/>
<polyline fill="none" stroke="#36a5b3" stroke-width="1.6" stroke-linejoin="round" points="119.0,464.0 127.1,462.8 135.1,463.2 143.2,463.2 151.3,463.2 159.3,462.8 167.4,462.8 175.5,462.8 183.6,462.8 191.6,463.6 199.7,464.0 207.8,462.8 215.8,463.2 223.9,462.8 232.0,463.2 240.0,463.6 248.1,463.6 256.2,463.6 264.2,464.0 272.3,463.6 280.4,462.8 288.5,463.6 296.5,463.6 304.6,463.6 312.7,462.8 320.7,463.6 328.8,463.6 336.9,464.4 344.9,464.4 353.0,464.0 361.1,463.6 369.1,464.4 377.2,462.8 385.3,464.0 393.4,462.8 401.4,464.0 409.5,464.4 417.6,462.8 425.6,463.6 433.7,464.0 441.8,462.8 449.8,464.4 457.9,464.4 466.0,463.2 474.0,462.8 482.1,464.4 490.2,463.6 498.3,463.2 506.3,464.0 514.4,462.8 522.5,464.4 530.5,463.2 538.6,463.6 546.7,462.8 554.7,462.8 562.8,463.6 570.9,464.0 578.9,462.8 587.0,464.0 595.1,463.2 603.1,464.0 611.2,464.4 619.3,463.6 627.4,464.4 635.4,463.6 643.5,464.4 651.6,463.2 659.6,463.6 667.7,463.2 675.8,463.2 683.8,464.0 691.9,463.2 700.0,462.8 708.0,462.8 716.1,464.0 724.2,464.4 732.3,462.8 740.3,463.6 748.4,463.6 756.5,462.8 764.5,464.0 772.6,464.0 780.7,462.8 788.7,464.0 796.8,462.8 804.9,463.6 812.9,463.2 821.0,463.6 829.1,463.6 837.2,464.0 845.2,464.4 853.3,464.4 861.4,463.2 869.4,464.0 877.5,463.2 885.6,464.0 893.6,463.2 901.7,464.4 909.8,464.4 917.8,464.4 925.9,462.8 934.0,463.6 942.1,464.4 950.1,463.6 958.2,464.4 966.3,463.2 974.3,464.0 982.4,464.4 990.5,463.6 998.5,463.2 1006.6,464.0 1014.7,464.0 1022.7,463.6 1030.8,464.4 1038.9,463.2 1047.0,463.2 1055.0,463.6 1063.1,464.0 1071.2,463.2 1079.2,464.4 1087.3,690.0"/>
<polyline fill="none" stroke="#9ca8f7" stroke-width="1.5" stroke-linejoin="round" points="119.0,489.0 127.3,500.0 135.2,552.7 175.6,552.7 183.9,513.0 192.2,562.7 224.6,562.7 232.5,548.3 240.5,469.8 289.1,469.8 296.7,500.4 304.6,562.7 337.0,562.7 345.0,564.5 353.2,572.8 394.7,572.8 401.9,571.8 409.8,562.7 425.4,562.7 433.7,518.8 449.9,518.8 457.8,508.0 466.1,450.0 506.5,450.0 514.4,467.3 522.7,558.0 563.0,558.0 570.6,543.0 579.3,469.8 618.9,469.8 627.2,474.5 675.9,474.5 684.1,487.8 692.0,549.0 724.5,549.0 732.8,538.6 740.8,489.6 773.2,489.6 781.2,494.3 788.7,543.6 837.4,543.6 845.3,567.1 853.2,686.0 894.0,686.0 901.9,649.2 909.5,460.0 949.8,460.0 957.7,497.2 966.0,686.0 998.5,686.0 1006.8,499.0 1046.6,498.5 1054.9,508.4 1063.0,552.9 1079.2,552.9"/>
<polyline fill="none" stroke="#7d3ca8" stroke-width="1.55" stroke-linejoin="round" points="353.2,493.2 361.2,482.7 369.5,466.5 377.4,458.2 385.7,459.0 394.0,455.7 401.9,448.2 409.8,448.6 418.1,451.8 433.7,452.8 442.3,462.9 457.8,460.0 474.0,461.1 482.0,505.8 490.3,504.4 498.6,500.8 522.7,502.6 555.1,502.6 563.4,509.4 571.4,508.0 636.2,508.0 644.1,510.0 659.6,506.5 675.9,500.0 692.0,497.2 700.4,497.5 708.3,499.7 716.2,500.0 724.5,519.5 732.8,521.3 748.7,519.5 765.0,533.2 780.5,535.7 796.7,535.7 805.7,540.4 838.1,539.3 892.2,538.6 910.2,536.8 931.8,537.5 960.6,535.7 1003.9,533.9 1050.0,533.2 1079.0,532.7"/>
<circle cx="337" cy="493.2" r="3" fill="#8a4db3"/>
</svg>
<div class="t" style="left:1156.3px;top:128.19px;font-size:11px;color:#454646;font-weight:bold;-webkit-text-stroke:0;letter-spacing:-0.14px;">Settings</div>
<svg class="abs" style="left:1158px;top:161.1px" width="7.2" height="10.2"><polyline points="1,1 5.2,5.1 1,9.2" fill="none" stroke="#36a0b4" stroke-width="1.9"/></svg>
<div class="t" style="left:1171.3px;top:161.07px;font-size:9.6px;color:#505050;letter-spacing:-0.2px;">General settings</div>
<div class="abs" style="left:1240.5px;top:168px;width:127.5px;height:1px;background:#8a8a8a"></div>
<svg class="abs" style="left:1158px;top:195.29999999999998px" width="7.2" height="10.2"><polyline points="1,1 5.2,5.1 1,9.2" fill="none" stroke="#36a0b4" stroke-width="1.9"/></svg>
<div class="t" style="left:1171.3px;top:195.27px;font-size:9.6px;color:#505050;letter-spacing:-0.2px;">Visual settings</div>
<div class="abs" style="left:1234px;top:202px;width:134px;height:1px;background:#8a8a8a"></div>
<svg class="abs" style="left:1156.6px;top:230.8px" width="10.6" height="7"><polyline points="1,1 5.3,5 9.6,1" fill="none" stroke="#36a0b4" stroke-width="1.9"/></svg>
<div class="t" style="left:1171.3px;top:229.97px;font-size:9.6px;color:#505050;letter-spacing:-0.2px;">Axes</div>
<div class="abs" style="left:1193.8px;top:237px;width:174.20000000000005px;height:1px;background:#8a8a8a"></div>
<div class="t" style="left:1171px;top:258.59px;font-size:11px;color:#505050;letter-spacing:-0.55px;">Y axis 1</div>
<svg class="abs" style="left:1210.7px;top:258.2px" width="13" height="13"><g transform="translate(0.8 11.6) rotate(-45) scale(0.9)" fill="#36a0b4"><path d="M0 0 L2.4 -1.4 L2.4 1.4 Z"/><rect x="3" y="-2" width="2.4" height="4" rx="0.4"/><rect x="6" y="-2.3" width="6.2" height="4.6" rx="0.5"/><rect x="12.8" y="-2.3" width="2.6" height="4.6" rx="0.5"/></g></svg>
<svg class="abs" style="left:1349.2px;top:259.4px" width="14" height="10"><path d="M0.2 4.7 Q3.2 0.2 6.8 0.2 Q10.4 0.2 13.4 4.7 Q10.4 9.2 6.8 9.2 Q3.2 9.2 0.2 4.7 Z" fill="#36a0b4"/><circle cx="6.8" cy="4.7" r="2.9" fill="none" stroke="#fff" stroke-width="0.9"/><circle cx="6.8" cy="4.7" r="1.5" fill="#36a0b4"/></svg>
<svg class="abs" style="left:1173px;top:277.9px" width="13" height="13"><circle cx="6.5" cy="6.5" r="6.5" fill="#111"/><rect x="5.6" y="5.4" width="2" height="5" fill="#fff"/><circle cx="6.6" cy="3.5" r="1.1" fill="#fff"/></svg>
<div class="t" style="left:1192px;top:278.59px;font-size:11px;color:#505050;letter-spacing:-0.05px;">Axis Metric</div>
<div class="box" style="left:1171px;top:293.6px;width:197px;height:68.5px"></div>
<div class="abs" style="left:1178.3px;top:296.40000000000003px;width:91.4px;height:17.2px;background:#efefef;border:1px solid #d2d2d2;border-radius:2px"></div>
<div class="t" style="left:1185.3px;top:298.79px;font-size:11px;color:#505050;letter-spacing:-0.16px;"><span style="color:#2f9db3">A:</span> Memory used</div>
<div class="abs" style="left:1178.3px;top:319.3px;width:165.4px;height:17.1px;background:#fff;border:1px solid #d6d6d6;border-radius:2px"></div>
<div class="t" style="left:1185px;top:321.39px;font-size:11px;color:#9a9a9a;letter-spacing:-0.22px;">C: .NET memory consumption...</div>
<div class="t" style="left:1171.6px;top:372.64px;font-size:10px;color:#505050;letter-spacing:-0.4px;">Position</div>
<div class="t" style="left:1273px;top:372.64px;font-size:10px;color:#505050;letter-spacing:-0.4px;">Min, Max</div>
<div class="box" style="left:1171px;top:387.1px;width:95.5px;height:24.6px"></div>
<div class="t" style="left:1181.6px;top:393.99px;font-size:11px;color:#505050;letter-spacing:-0.07px;">Left</div>
<svg class="abs" style="left:1249px;top:397.1px" width="11" height="7"><polyline points="1,1 5.5,5 10,1" fill="none" stroke="#36a0b4" stroke-width="1.6"/></svg>
<div class="box" style="left:1272.5px;top:387.1px;width:95.5px;height:24.6px"></div>
<div class="t" style="left:1283px;top:393.99px;font-size:11px;color:#9a9a9a;letter-spacing:-0.05px;">Auto, Auto</div>
<div class="t" style="left:1171px;top:430.59px;font-size:11px;color:#505050;letter-spacing:-0.55px;">Y axis 2</div>
<svg class="abs" style="left:1210.7px;top:430.2px" width="13" height="13"><g transform="translate(0.8 11.6) rotate(-45) scale(0.9)" fill="#36a0b4"><path d="M0 0 L2.4 -1.4 L2.4 1.4 Z"/><rect x="3" y="-2" width="2.4" height="4" rx="0.4"/><rect x="6" y="-2.3" width="6.2" height="4.6" rx="0.5"/><rect x="12.8" y="-2.3" width="2.6" height="4.6" rx="0.5"/></g></svg>
<svg class="abs" style="left:1349.2px;top:431.4px" width="14" height="10"><path d="M0.2 4.7 Q3.2 0.2 6.8 0.2 Q10.4 0.2 13.4 4.7 Q10.4 9.2 6.8 9.2 Q3.2 9.2 0.2 4.7 Z" fill="#36a0b4"/><circle cx="6.8" cy="4.7" r="2.9" fill="none" stroke="#fff" stroke-width="0.9"/><circle cx="6.8" cy="4.7" r="1.5" fill="#36a0b4"/></svg>
<svg class="abs" style="left:1173px;top:449.9px" width="13" height="13"><circle cx="6.5" cy="6.5" r="6.5" fill="#111"/><rect x="5.6" y="5.4" width="2" height="5" fill="#fff"/><circle cx="6.6" cy="3.5" r="1.1" fill="#fff"/></svg>
<div class="t" style="left:1192px;top:450.59px;font-size:11px;color:#505050;letter-spacing:-0.05px;">Axis Metric</div>
<div class="box" style="left:1171px;top:466.5px;width:197px;height:46px"></div>
<div class="abs" style="left:1178.3px;top:469.3px;width:87.5px;height:17.2px;background:#efefef;border:1px solid #d2d2d2;border-radius:2px"></div>
<div class="t" style="left:1185.3px;top:471.69px;font-size:11px;color:#505050;letter-spacing:-0.66px;"><span style="color:#2f9db3">B:</span> CPU usage %</div>
<div class="t" style="left:1171.6px;top:523.03px;font-size:10px;color:#505050;letter-spacing:-0.4px;">Position</div>
<div class="t" style="left:1273px;top:523.03px;font-size:10px;color:#505050;letter-spacing:-0.4px;">Min, Max</div>
<div class="box" style="left:1171px;top:537.5px;width:95.5px;height:24.6px"></div>
<div class="t" style="left:1181.6px;top:544.39px;font-size:11px;color:#505050;letter-spacing:-0.07px;">Right</div>
<svg class="abs" style="left:1249px;top:547.5px" width="11" height="7"><polyline points="1,1 5.5,5 10,1" fill="none" stroke="#36a0b4" stroke-width="1.6"/></svg>
<div class="box" style="left:1272.5px;top:537.5px;width:95.5px;height:24.6px"></div>
<div class="t" style="left:1283px;top:544.39px;font-size:11px;color:#9a9a9a;letter-spacing:-0.05px;">Auto, Auto</div>
<div class="t" style="left:1171px;top:581.49px;font-size:11px;color:#505050;letter-spacing:-0.55px;">Y axis 3</div>
<svg class="abs" style="left:1210.7px;top:581.0999999999999px" width="13" height="13"><g transform="translate(0.8 11.6) rotate(-45) scale(0.9)" fill="#36a0b4"><path d="M0 0 L2.4 -1.4 L2.4 1.4 Z"/><rect x="3" y="-2" width="2.4" height="4" rx="0.4"/><rect x="6" y="-2.3" width="6.2" height="4.6" rx="0.5"/><rect x="12.8" y="-2.3" width="2.6" height="4.6" rx="0.5"/></g></svg>
<svg class="abs" style="left:1324.7px;top:582.3px" width="14" height="10"><path d="M0.2 4.7 Q3.2 0.2 6.8 0.2 Q10.4 0.2 13.4 4.7 Q10.4 9.2 6.8 9.2 Q3.2 9.2 0.2 4.7 Z" fill="#36a0b4"/><circle cx="6.8" cy="4.7" r="2.9" fill="none" stroke="#fff" stroke-width="0.9"/><circle cx="6.8" cy="4.7" r="1.5" fill="#36a0b4"/></svg>
<svg class="abs" style="left:1351px;top:581.8px" width="10.5" height="10.5"><path d="M1 1 L9.5 9.5 M9.5 1 L1 9.5" stroke="#36a0b4" stroke-width="1.6"/></svg>
<svg class="abs" style="left:1173px;top:600.8px" width="13" height="13"><circle cx="6.5" cy="6.5" r="6.5" fill="#111"/><rect x="5.6" y="5.4" width="2" height="5" fill="#fff"/><circle cx="6.6" cy="3.5" r="1.1" fill="#fff"/></svg>
<div class="t" style="left:1192px;top:601.49px;font-size:11px;color:#505050;letter-spacing:-0.05px;">Axis Metric</div>
<div class="box" style="left:1171px;top:615.5px;width:197px;height:46.7px"></div>
<div class="abs" style="left:1178.3px;top:618.3px;width:182.6px;height:17.2px;background:#efefef;border:1px solid #d2d2d2;border-radius:2px"></div>
<div class="t" style="left:1185.3px;top:620.69px;font-size:11px;color:#505050;letter-spacing:-0.22px;"><span style="color:#2f9db3">C:</span> .NET memory consumption...</div>
<svg class="abs" style="left:1347.5px;top:622.8px" width="8.5" height="8.5"><path d="M1 1 L7.5 7.5 M7.5 1 L1 7.5" stroke="#36a0b4" stroke-width="1.5"/></svg>
<div class="t" style="left:1171.6px;top:672.74px;font-size:10px;color:#505050;letter-spacing:-0.4px;">Position</div>
<div class="t" style="left:1273px;top:672.74px;font-size:10px;color:#505050;letter-spacing:-0.4px;">Min, Max</div>
<div class="box" style="left:1171px;top:687.2px;width:95.5px;height:24.6px"></div>
<div class="t" style="left:1181.6px;top:694.09px;font-size:11px;color:#505050;letter-spacing:-0.07px;">Left</div>
<svg class="abs" style="left:1249px;top:697.2px" width="11" height="7"><polyline points="1,1 5.5,5 10,1" fill="none" stroke="#36a0b4" stroke-width="1.6"/></svg>
<div class="box" style="left:1272.5px;top:687.2px;width:95.5px;height:24.6px"></div>
<div class="t" style="left:1283px;top:694.09px;font-size:11px;color:#9a9a9a;letter-spacing:-0.05px;">Auto, Auto</div>
<div class="box" style="left:1171px;top:724.1px;width:74.3px;height:24.1px"></div>
<div class="t" style="left:1183px;top:730.69px;font-size:11px;color:#aaa;letter-spacing:-0.2px;">Add Y axis</div>
<div class="t" style="left:1171px;top:767.59px;font-size:11px;color:#505050;letter-spacing:-0.55px;">X axis</div>
<svg class="abs" style="left:1204px;top:767.2px" width="13" height="13"><g transform="translate(0.8 11.6) rotate(-45) scale(0.9)" fill="#36a0b4"><path d="M0 0 L2.4 -1.4 L2.4 1.4 Z"/><rect x="3" y="-2" width="2.4" height="4" rx="0.4"/><rect x="6" y="-2.3" width="6.2" height="4.6" rx="0.5"/><rect x="12.8" y="-2.3" width="2.6" height="4.6" rx="0.5"/></g></svg>
<svg class="abs" style="left:1349.2px;top:768.4px" width="14" height="10"><path d="M0.2 4.7 Q3.2 0.2 6.8 0.2 Q10.4 0.2 13.4 4.7 Q10.4 9.2 6.8 9.2 Q3.2 9.2 0.2 4.7 Z" fill="#36a0b4"/><circle cx="6.8" cy="4.7" r="2.9" fill="none" stroke="#fff" stroke-width="0.9"/><circle cx="6.8" cy="4.7" r="1.5" fill="#36a0b4"/></svg>
</body></html>
